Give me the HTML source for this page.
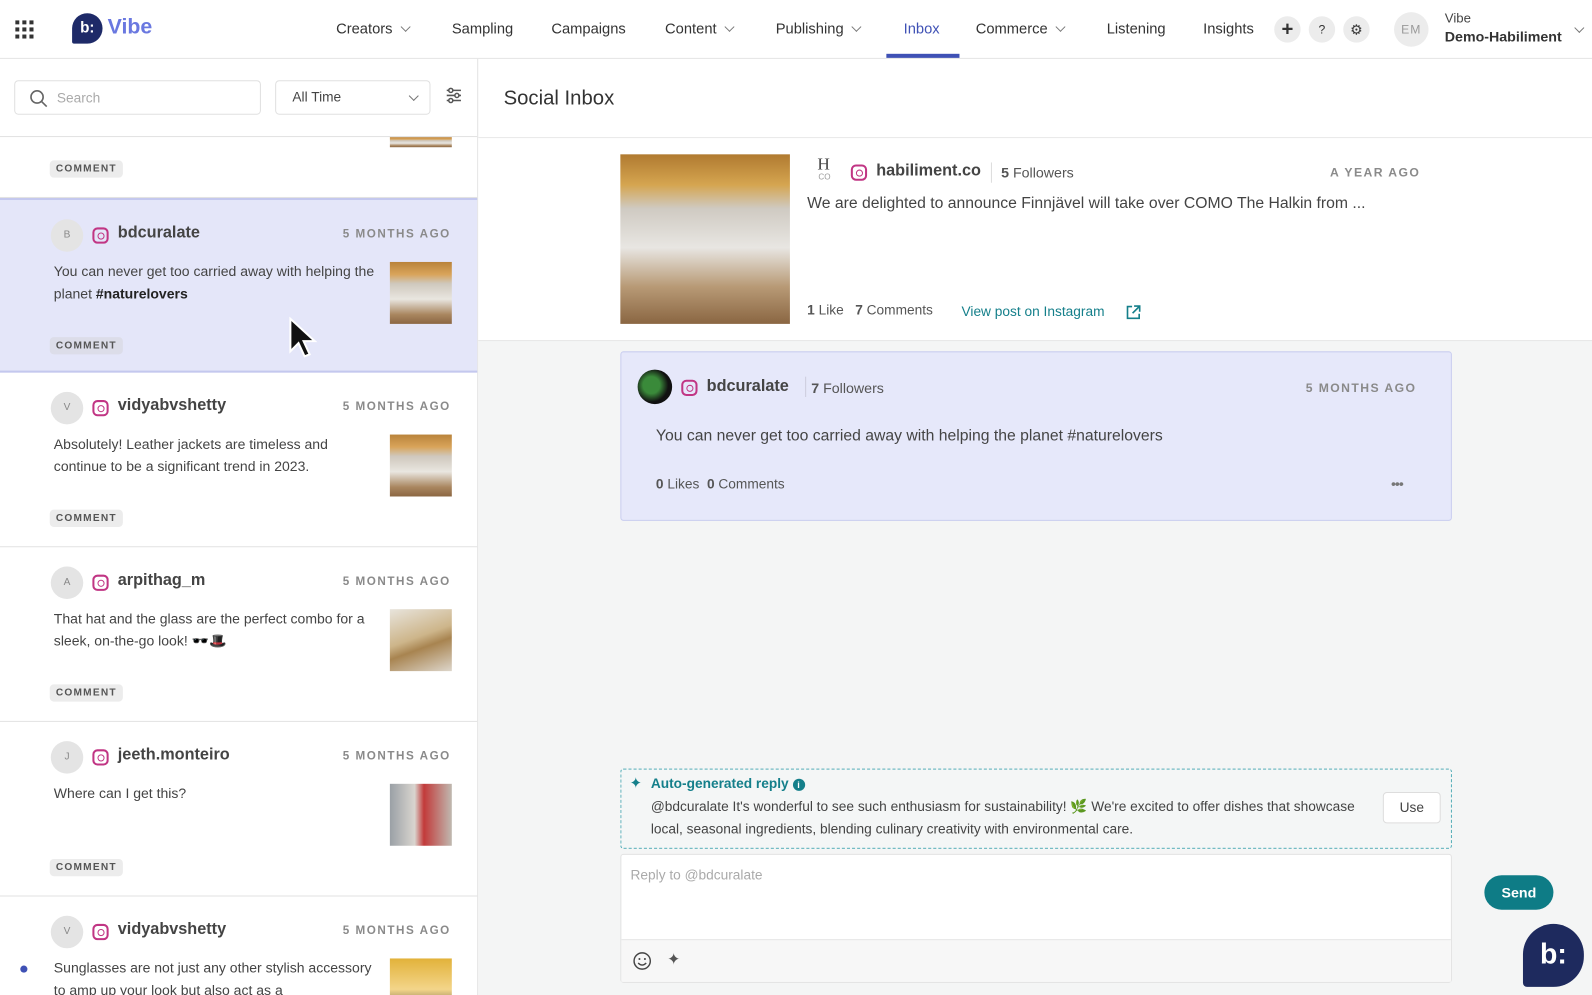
<!DOCTYPE html>
<html><head><meta charset="utf-8"><style>
*{box-sizing:border-box;margin:0;padding:0}
html,body{width:1592px;height:995px;overflow:hidden}
body{background:#fff;font-family:"Liberation Sans","Noto Sans CJK JP",sans-serif;color:#333}
#w{width:1568px;height:980px;transform:scale(1.01531);transform-origin:0 0;position:absolute;left:0;top:0;overflow:hidden}
.a{position:absolute}
.nav{font-size:14.5px;color:#333;font-weight:500}
.chev{display:inline-block;width:7px;height:7px;border-right:1.3px solid #777;border-bottom:1.3px solid #777;transform:rotate(45deg);margin-left:9px;position:relative;top:-3px}
.chv{position:absolute;width:7px;height:7px;border-right:1.3px solid #777;border-bottom:1.3px solid #777;transform:rotate(45deg)}
.circ{width:26px;height:26px;border-radius:50%;background:#ececec;text-align:center;line-height:26px;font-size:14px;color:#333}
.item{position:absolute;left:0;width:470px;height:172px;border-bottom:1px solid #e2e2e2;overflow:hidden}
.av{position:absolute;left:50px;top:19px;width:32px;height:32px;border-radius:50%;background:#e4e4e4;color:#888;font-size:10px;text-align:center;line-height:32px}
.ig{position:absolute;width:16px;height:16px;border-radius:5px;border:2px solid #c13584;}
.ig::after{content:"";position:absolute;left:2.5px;top:2.5px;width:5px;height:5px;border-radius:50%;border:1.6px solid #c13584}
.un{position:absolute;left:116px;top:24px;font-size:16px;font-weight:bold;color:#444}
.tm{position:absolute;right:26px;top:28px;font-size:11.5px;letter-spacing:1.5px;color:#8a8a8a;font-weight:bold}
.tx{position:absolute;left:53px;top:60px;width:322px;font-size:13.8px;line-height:22px;color:#444}
.th{position:absolute;left:384px;top:61px;width:61px;height:61px}
.tag{position:absolute;left:49px;top:135px;background:#ececec;border-radius:4px;font-size:10px;font-weight:bold;letter-spacing:1.2px;padding:3px 6px;color:#555}
.photo{background:linear-gradient(180deg,#b9833b 0%,#d9a45a 20%,#cfc8bd 35%,#e9e6e0 60%,#a9865f 85%,#8b6642 100%)}
</style></head><body><div id="w">
<div class="a" style="left:0;top:0;width:1568px;height:58px;border-bottom:1px solid #e4e4e4;background:#fff"></div>
<svg class="a" style="left:15px;top:20px" width="18" height="18"><g fill="#333"><rect x="0" y="0" width="4" height="4"/><rect x="7" y="0" width="4" height="4"/><rect x="14" y="0" width="4" height="4"/><rect x="0" y="7" width="4" height="4"/><rect x="7" y="7" width="4" height="4"/><rect x="14" y="7" width="4" height="4"/><rect x="0" y="14" width="4" height="4"/><rect x="7" y="14" width="4" height="4"/><rect x="14" y="14" width="4" height="4"/></g></svg>
<div class="a" style="left:71px;top:13px;width:30px;height:30px;border-radius:15px 15px 15px 2px;background:#1e2a68;color:#fff;font-weight:bold;font-size:15px;text-align:center;line-height:29px">b:</div>
<div class="a" style="left:106px;top:15px;font-size:21px;font-weight:bold;color:#6a78e0">Vibe</div>
<div class="a nav" style="left:331px;top:21px">Creators<span class="chev"></span></div>
<div class="a nav" style="left:445px;top:21px">Sampling</div>
<div class="a nav" style="left:543px;top:21px">Campaigns</div>
<div class="a nav" style="left:655px;top:21px">Content<span class="chev"></span></div>
<div class="a nav" style="left:764px;top:21px">Publishing<span class="chev"></span></div>
<div class="a nav" style="left:890px;top:21px;color:#3f51b5">Inbox</div>
<div class="a" style="left:873px;top:53px;width:72px;height:4px;background:#3f51b5"></div>
<div class="a nav" style="left:961px;top:21px">Commerce<span class="chev"></span></div>
<div class="a nav" style="left:1090px;top:21px">Listening</div>
<div class="a nav" style="left:1185px;top:21px">Insights</div>
<div class="a circ" style="left:1255px;top:16px;font-size:20px;font-weight:bold">+</div>
<div class="a circ" style="left:1289px;top:16px;font-size:12px">?</div>
<div class="a circ" style="left:1323px;top:16px;font-size:14px">⚙</div>
<div class="a circ" style="left:1373px;top:12px;width:34px;height:34px;line-height:34px;font-size:12px;color:#999;letter-spacing:1px">EM</div>
<div class="a" style="left:1423px;top:10px;font-size:13px;color:#444">Vibe</div>
<div class="a" style="left:1423px;top:28px;font-size:14px;font-weight:bold;color:#333">Demo-Habiliment</div>
<span class="chv" style="left:1552px;top:24px"></span>

<div class="a" style="left:470px;top:58px;width:1px;height:922px;background:#e2e2e2"></div>
<div class="a" style="left:0;top:134px;width:470px;height:1px;background:#e2e2e2"></div>
<div class="a" style="left:14px;top:79px;width:243px;height:34px;border:1px solid #e0e0e0;border-radius:4px"></div>
<svg class="a" style="left:29px;top:88px" width="18" height="18"><circle cx="7.5" cy="7.5" r="6" fill="none" stroke="#666" stroke-width="1.6"/><path d="M12 12l5 5" stroke="#666" stroke-width="1.6"/></svg>
<div class="a" style="left:56px;top:89px;font-size:13.5px;color:#aaa">Search</div>
<div class="a" style="left:271px;top:79px;width:153px;height:34px;border:1px solid #e0e0e0;border-radius:4px"></div>
<div class="a" style="left:288px;top:88px;font-size:13.5px;color:#444">All Time</div>
<span class="chv" style="left:404px;top:91px"></span>
<svg class="a" style="left:439px;top:85px" width="16" height="18"><g stroke="#555" stroke-width="1.5" fill="none"><path d="M1 4h14M1 9h14M1 14h14"/><circle cx="5" cy="4" r="2" fill="#fff"/><circle cx="11" cy="9" r="2" fill="#fff"/><circle cx="5" cy="14" r="2" fill="#fff"/></g></svg>

<div class="item" style="top:135px;height:60px">
 <div class="th photo" style="top:0;height:10px;left:384px"></div>
 <div class="tag" style="top:23px">COMMENT</div>
</div>
<div class="item" style="top:195px;background:#e4e6f9;border-top:2px solid #c4c8ee;border-bottom:2px solid #c4c8ee">
 <div class="av">B</div><div class="ig" style="left:91px;top:27px"></div>
 <div class="un">bdcuralate</div><div class="tm">5 MONTHS AGO</div>
 <div class="tx">You can never get too carried away with helping the planet <b style="color:#222">#naturelovers</b></div>
 <div class="th photo"></div><div class="tag" style="background:#dcdde9">COMMENT</div>
 <svg class="a" style="left:283px;top:115px" width="32" height="44"><path d="M3 2v32l8-8 6 13 5-2-6-13h11z" fill="#111" stroke="#fff" stroke-width="2"/></svg>
</div>
<div class="item" style="top:367px">
 <div class="av">V</div><div class="ig" style="left:91px;top:27px"></div>
 <div class="un">vidyabvshetty</div><div class="tm">5 MONTHS AGO</div>
 <div class="tx">Absolutely! Leather jackets are timeless and continue to be a significant trend in 2023.</div>
 <div class="th photo"></div><div class="tag">COMMENT</div>
</div>
<div class="item" style="top:539px">
 <div class="av">A</div><div class="ig" style="left:91px;top:27px"></div>
 <div class="un">arpithag_m</div><div class="tm">5 MONTHS AGO</div>
 <div class="tx">That hat and the glass are the perfect combo for a sleek, on-the-go look! 🕶️🎩</div>
 <div class="th" style="background:linear-gradient(160deg,#e8e4dc,#cdb58a 45%,#a88450 60%,#ddd6cb)"></div><div class="tag">COMMENT</div>
</div>
<div class="item" style="top:711px">
 <div class="av">J</div><div class="ig" style="left:91px;top:27px"></div>
 <div class="un">jeeth.monteiro</div><div class="tm">5 MONTHS AGO</div>
 <div class="tx">Where can I get this?</div>
 <div class="th" style="background:linear-gradient(90deg,#9aa0a6,#d9d5cf 40%,#c23a3a 55%,#bfb9b0)"></div><div class="tag">COMMENT</div>
</div>
<div class="item" style="top:883px;height:97px;border:none">
 <div class="av">V</div><div class="ig" style="left:91px;top:27px"></div>
 <div class="un">vidyabvshetty</div><div class="tm">5 MONTHS AGO</div>
 <div class="a" style="left:20px;top:68px;width:7px;height:7px;border-radius:50%;background:#3f51b5"></div>
 <div class="tx">Sunglasses are not just any other stylish accessory to amp up your look but also act as a</div>
 <div class="th" style="background:linear-gradient(180deg,#e2b23a,#f3d58a 50%,#222)"></div>
</div>

<div class="a" style="left:471px;top:135px;width:1097px;height:845px;background:#f4f5f5"></div>
<div class="a" style="left:496px;top:86px;font-size:20px;color:#333">Social Inbox</div>
<div class="a" style="left:471px;top:135px;width:1097px;height:201px;background:#fff;border-bottom:1px solid #e4e4e4;border-top:1px solid #e8e8e8"></div>
<div class="a" style="left:611px;top:152px;width:167px;height:167px;background:linear-gradient(180deg,#b07a30 0%,#d5a550 18%,#cfcac2 32%,#e8e6e2 55%,#b89a76 78%,#8a6642 100%)"></div>
<div class="a" style="left:805px;top:152px;font-size:17px;color:#444;font-family:'Liberation Serif',serif">H</div>
<div class="a" style="left:806px;top:170px;font-size:8px;color:#999">CO</div>
<div class="ig" style="left:838px;top:162px"></div>
<div class="a" style="left:863px;top:160px;font-size:16px;font-weight:bold;color:#444">habiliment.co</div>
<div class="a" style="left:976px;top:160px;width:1px;height:20px;background:#ddd"></div>
<div class="a" style="left:986px;top:162px;font-size:14px;color:#555"><b>5</b> Followers</div>
<div class="a" style="left:1310px;top:163px;font-size:12px;letter-spacing:1.4px;color:#8a8a8a;font-weight:bold">A YEAR AGO</div>
<div class="a" style="left:795px;top:192px;font-size:15.5px;color:#444">We are delighted to announce Finnjävel will take over COMO The Halkin from ...</div>
<div class="a" style="left:795px;top:298px;font-size:13.5px;color:#555"><b>1</b> Like&nbsp;&nbsp; <b>7</b> Comments</div>
<div class="a" style="left:947px;top:299px;font-size:13.5px;color:#147f8a">View post on Instagram</div>
<svg class="a" style="left:1109px;top:300px" width="15" height="15"><path d="M6 2H1.5v11.5H13V9M8 1.5h5.5V7M13.5 1.5L6.5 8.5" fill="none" stroke="#147f8a" stroke-width="1.6"/></svg>

<div class="a" style="left:611px;top:346px;width:819px;height:167px;background:#e6e8fa;border:1.5px solid #c9cdf0;border-radius:3px"></div>
<div class="a" style="left:628px;top:364px;width:34px;height:34px;border-radius:50%;background:radial-gradient(circle at 40% 45%,#3a8a3a 0 30%,#111 60%)"></div>
<div class="ig" style="left:671px;top:374px"></div>
<div class="a" style="left:696px;top:372px;font-size:16px;font-weight:bold;color:#444">bdcuralate</div>
<div class="a" style="left:793px;top:371px;width:1px;height:20px;background:#ccd"></div>
<div class="a" style="left:799px;top:374px;font-size:14px;color:#555"><b>7</b> Followers</div>
<div class="a" style="left:1286px;top:375px;font-size:12px;letter-spacing:1.4px;color:#8a8a8a;font-weight:bold">5 MONTHS AGO</div>
<div class="a" style="left:646px;top:421px;font-size:15.5px;color:#444">You can never get too carried away with helping the planet #naturelovers</div>
<div class="a" style="left:646px;top:469px;font-size:13.5px;color:#555"><b>0</b> Likes&nbsp; <b>0</b> Comments</div>
<div class="a" style="left:1370px;top:468px;font-size:14px;color:#777;letter-spacing:-1px">•••</div>

<div class="a" style="left:611px;top:757px;width:819px;height:79px;border:1.5px dashed #4aa9b4;border-radius:3px;background:#f4f6f6"></div>
<div class="a" style="left:620px;top:762px;font-size:15px;color:#147f8a">✦</div>
<div class="a" style="left:641px;top:764px;font-size:13.5px;font-weight:bold;color:#147f8a">Auto-generated reply <span style="display:inline-block;width:12px;height:12px;border-radius:50%;background:#147f8a;color:#fff;font-size:9px;text-align:center;line-height:12px">i</span></div>
<div class="a" style="left:641px;top:784px;width:700px;font-size:13.5px;line-height:22px;color:#444">@bdcuralate It's wonderful to see such enthusiasm for sustainability! 🌿 We're excited to offer dishes that showcase local, seasonal ingredients, blending culinary creativity with environmental care.</div>
<div class="a" style="left:1362px;top:780px;width:57px;height:31px;background:#fff;border:1px solid #ddd;border-radius:4px;font-size:13.5px;text-align:center;line-height:30px;color:#444">Use</div>

<div class="a" style="left:611px;top:841px;width:819px;height:127px;background:#fff;border:1px solid #e2e2e2;border-radius:3px"></div>
<div class="a" style="left:612px;top:925px;width:817px;height:42px;background:#f7f7f7;border-top:1px solid #e6e6e6"></div>
<div class="a" style="left:621px;top:854px;font-size:13.5px;color:#aaa">Reply to @bdcuralate</div>
<svg class="a" style="left:623px;top:937px" width="19" height="19"><circle cx="9.5" cy="9.5" r="8" fill="none" stroke="#444" stroke-width="1.4"/><circle cx="6.8" cy="7.5" r="1" fill="#444"/><circle cx="12.2" cy="7.5" r="1" fill="#444"/><path d="M5.5 11.5q4 4 8 0" fill="none" stroke="#444" stroke-width="1.3"/></svg>
<div class="a" style="left:657px;top:935px;font-size:16px;color:#555">✦</div>
<div class="a" style="left:1462px;top:862px;width:68px;height:34px;border-radius:17px;background:#0e7c86;color:#fff;font-weight:bold;font-size:14px;text-align:center;line-height:34px">Send</div>
<div class="a" style="left:1500px;top:910px;width:60px;height:62px;border-radius:30px 30px 30px 4px;background:#1e2a5e;color:#fff;font-weight:bold;font-size:28px;text-align:center;line-height:60px">b:</div>
</div></body></html>
